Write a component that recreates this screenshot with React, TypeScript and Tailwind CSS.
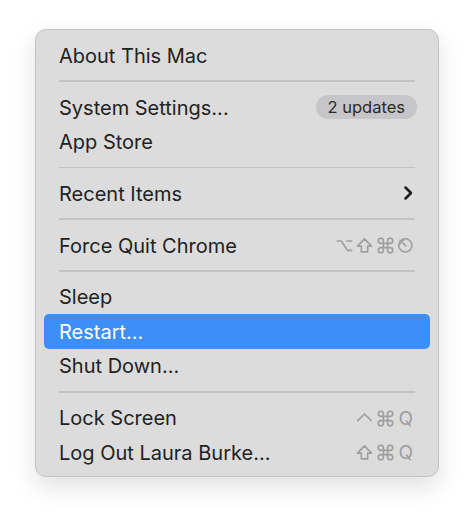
import React from 'react';

type Item = {
	label: string;
	keys?: string[];
	badge?: string;
	submenu?: boolean;
	active?: boolean;
};

const groups: Item[][] = [
	[{ label: 'About This Mac' }],
	[{ label: 'System Settings...', badge: '2 updates' }, { label: 'App Store' }],
	[{ label: 'Recent Items', submenu: true }],
	[{ label: 'Force Quit Chrome', keys: ['opt', 'shift', 'cmd', 'esc'] }],
	[{ label: 'Sleep' }, { label: 'Restart...', active: true }, { label: 'Shut Down...' }],
	[
		{ label: 'Lock Screen', keys: ['ctrl', 'cmd', 'Q'] },
		{ label: 'Log Out Laura Burke...', keys: ['shift', 'cmd', 'Q'] },
	],
];

// shortcut glyphs, drawn to match the macOS menu symbols
const glyphPaths: Record<string, string> = {
	opt: 'M1.2 3.8 H5 L10.8 12.6 H14.8 M10.2 3.8 H14.8',
	shift: 'M8 1.8 L14.6 8.6 H11 V14 H5 V8.6 H1.4 Z',
	cmd: 'M6 6 V3.6 A2.4 2.4 0 1 0 3.6 6 H12.4 A2.4 2.4 0 1 0 10 3.6 V12.4 A2.4 2.4 0 1 0 12.4 10 H3.6 A2.4 2.4 0 1 0 6 12.4 Z',
	ctrl: 'M1.6 10 L8 3.8 L14.4 10',
	esc: 'M5.4 2.2 A6.2 6.2 0 1 1 2.2 5.4 M8.2 8.2 L3 3 M3 3 V6.4 M3 3 H6.4',
};

const Key = ({ k }: { k: string }) => (
	<span className="flex h-[20px] w-[20.5px] items-center justify-center">
		{k === 'Q' ? (
			<span className="text-[19px] leading-none">Q</span>
		) : (
			<svg width="17" height="17" viewBox="0 0 16 16" fill="none" stroke="currentColor" strokeWidth="1.5" strokeLinecap="round" strokeLinejoin="round">
				<path d={glyphPaths[k]} />
			</svg>
		)}
	</span>
);

const MenuRow = ({ item }: { item: Item }) => (
	<div
		className={`flex h-[34.5px] items-center justify-between rounded-[5px] pl-[15px] pr-[15px] ${
			item.active ? 'bg-[#3d8ff7] text-white' : 'text-[#222222]'
		}`}
	>
		<span className="mt-[1px] text-[20px] leading-none">{item.label}</span>
		{item.badge && (
			<span className="mr-[-2px] rounded-full bg-[#c6c6c8] px-[12px] py-[3px] text-[16.5px] leading-[18px] text-[#2a2a2a]">
				{item.badge}
			</span>
		)}
		{item.submenu && (
			<svg width="12" height="16" viewBox="0 0 12 16" className="mr-[1px]" fill="none" stroke="#1f1f1f" strokeWidth="2.5" strokeLinecap="round" strokeLinejoin="round">
				<path d="M3.5 2.5 L9 8 L3.5 13.5" />
			</svg>
		)}
		{item.keys && (
			<span className="mr-[-1px] mt-[1px] flex items-center text-[#9e9ea0]">
				{item.keys.map((k, i) => (
					<Key key={i} k={k} />
				))}
			</span>
		)}
	</div>
);

export default function App() {
	return (
		<div className="h-[519px] w-[474px] bg-white pl-[35px] pt-[29px] font-['Inter',sans-serif]">
			<div className="w-[404px] rounded-[11px] border border-[#c4c4c6] bg-[#dcdcdd] px-[8px] pb-[7px] pt-[8px] shadow-[0_10px_24px_rgba(0,0,0,0.12)]">
				{groups.map((group, gi) => (
					<div key={gi}>
						{gi > 0 && (
							<div className="flex h-[17.3px] items-center px-[15px]">
								<div className="h-[1.5px] w-full bg-[#c3c3c5]" />
							</div>
						)}
						{group.map((item) => (
							<MenuRow key={item.label} item={item} />
						))}
					</div>
				))}
			</div>
		</div>
	);
}
